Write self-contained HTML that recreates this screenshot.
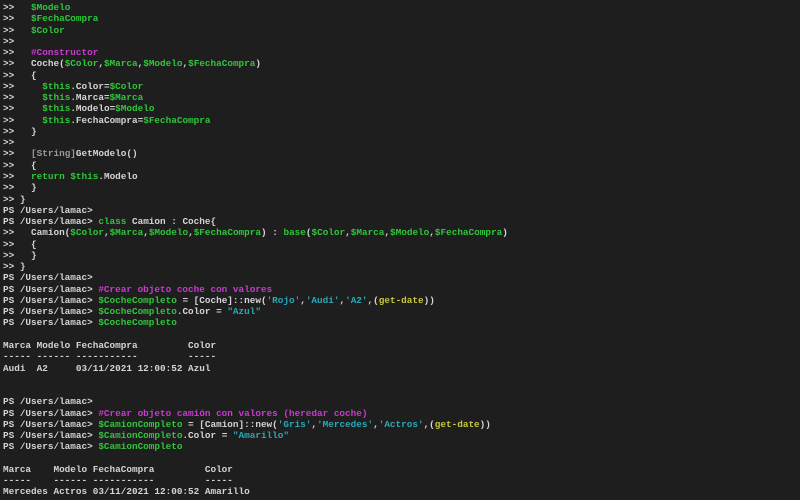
<!DOCTYPE html>
<html><head><meta charset="utf-8"><style>
html,body{margin:0;padding:0;background:#1e1e1e;width:800px;height:500px;overflow:hidden}
pre{margin:0;padding:2px 0 0 3px;font-family:"Liberation Mono",monospace;font-size:9.35px;line-height:11.26px;color:#d4d4d4;font-weight:bold}
.g{color:#2fc63a}.m{color:#c93ad0}.c{color:#2aa8b8}.y{color:#c8c83a}.d{color:#9a9a9a}
</style></head><body><pre>&gt;&gt;   <span class="g">$Modelo</span>
&gt;&gt;   <span class="g">$FechaCompra</span>
&gt;&gt;   <span class="g">$Color</span>
&gt;&gt;
&gt;&gt;   <span class="m">#Constructor</span>
&gt;&gt;   Coche(<span class="g">$Color</span>,<span class="g">$Marca</span>,<span class="g">$Modelo</span>,<span class="g">$FechaCompra</span>)
&gt;&gt;   {
&gt;&gt;     <span class="g">$this</span>.Color=<span class="g">$Color</span>
&gt;&gt;     <span class="g">$this</span>.Marca=<span class="g">$Marca</span>
&gt;&gt;     <span class="g">$this</span>.Modelo=<span class="g">$Modelo</span>
&gt;&gt;     <span class="g">$this</span>.FechaCompra=<span class="g">$FechaCompra</span>
&gt;&gt;   }
&gt;&gt;
&gt;&gt;   <span class="d">[String]</span>GetModelo()
&gt;&gt;   {
&gt;&gt;   <span class="g">return</span> <span class="g">$this</span>.Modelo
&gt;&gt;   }
&gt;&gt; }
PS /Users/lamac&gt;
PS /Users/lamac&gt; <span class="g">class</span> Camion : Coche{
&gt;&gt;   Camion(<span class="g">$Color</span>,<span class="g">$Marca</span>,<span class="g">$Modelo</span>,<span class="g">$FechaCompra</span>) : <span class="g">base</span>(<span class="g">$Color</span>,<span class="g">$Marca</span>,<span class="g">$Modelo</span>,<span class="g">$FechaCompra</span>)
&gt;&gt;   {
&gt;&gt;   }
&gt;&gt; }
PS /Users/lamac&gt;
PS /Users/lamac&gt; <span class="m">#Crear objeto coche con valores</span>
PS /Users/lamac&gt; <span class="g">$CocheCompleto</span> = [Coche]::new(<span class="c">'Rojo'</span>,<span class="c">'Audi'</span>,<span class="c">'A2'</span>,(<span class="y">get-date</span>))
PS /Users/lamac&gt; <span class="g">$CocheCompleto</span>.Color = <span class="c">"Azul"</span>
PS /Users/lamac&gt; <span class="g">$CocheCompleto</span>

Marca Modelo FechaCompra         Color
----- ------ -----------         -----
Audi  A2     03/11/2021 12:00:52 Azul


PS /Users/lamac&gt;
PS /Users/lamac&gt; <span class="m">#Crear objeto camión con valores (heredar coche)</span>
PS /Users/lamac&gt; <span class="g">$CamionCompleto</span> = [Camion]::new(<span class="c">'Gris'</span>,<span class="c">'Mercedes'</span>,<span class="c">'Actros'</span>,(<span class="y">get-date</span>))
PS /Users/lamac&gt; <span class="g">$CamionCompleto</span>.Color = <span class="c">"Amarillo"</span>
PS /Users/lamac&gt; <span class="g">$CamionCompleto</span>

Marca    Modelo FechaCompra         Color
-----    ------ -----------         -----
Mercedes Actros 03/11/2021 12:00:52 Amarillo
</pre></body></html>
